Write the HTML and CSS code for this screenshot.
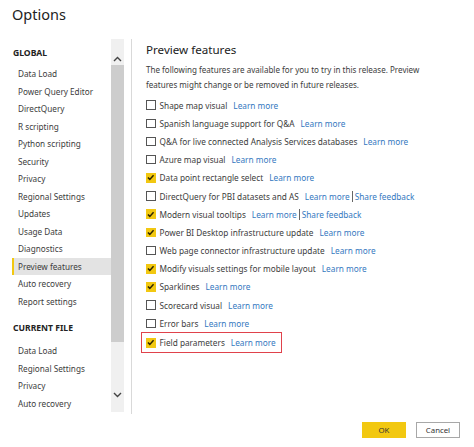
FILE: index.html
```html
<!DOCTYPE html>
<html>
<head>
<meta charset="utf-8">
<link rel="stylesheet" href="styles.css">
</head>
<body>
<div class="dialog">
  <h1 class="title">Options</h1>
  <div class="main">
    <nav class="sidebar">
      <div class="nav-list">
        <div class="group">GLOBAL</div>
        <div class="item">Data Load</div>
        <div class="item">Power Query Editor</div>
        <div class="item">DirectQuery</div>
        <div class="item">R scripting</div>
        <div class="item">Python scripting</div>
        <div class="item">Security</div>
        <div class="item">Privacy</div>
        <div class="item">Regional Settings</div>
        <div class="item">Updates</div>
        <div class="item">Usage Data</div>
        <div class="item">Diagnostics</div>
        <div class="item active">Preview features</div>
        <div class="item">Auto recovery</div>
        <div class="item">Report settings</div>
        <div class="group group2">CURRENT FILE</div>
        <div class="item">Data Load</div>
        <div class="item">Regional Settings</div>
        <div class="item">Privacy</div>
        <div class="item">Auto recovery</div>
      </div>
      <div class="scrollbar">
        <svg class="arrow up" width="9" height="6" viewBox="0 0 9 6"><path d="M1 5 L4.5 1.5 L8 5" fill="none" stroke="#444" stroke-width="1.4"/></svg>
        <div class="thumb"></div>
        <div class="track-rest"></div>
        <svg class="arrow down" width="9" height="6" viewBox="0 0 9 6"><path d="M1 1 L4.5 4.5 L8 1" fill="none" stroke="#444" stroke-width="1.4"/></svg>
      </div>
    </nav>
    <section class="content">
      <h2 class="heading">Preview features</h2>
      <p class="desc">The following features are available for you to try in this release. Preview features might change or be removed in future releases.</p>
      <ul class="features">
        <li class="row"><span class="cb"></span><span class="label">Shape map visual</span><a class="link">Learn more</a></li>
        <li class="row"><span class="cb"></span><span class="label">Spanish language support for Q&amp;A</span><a class="link">Learn more</a></li>
        <li class="row"><span class="cb"></span><span class="label">Q&amp;A for live connected Analysis Services databases</span><a class="link">Learn more</a></li>
        <li class="row"><span class="cb"></span><span class="label">Azure map visual</span><a class="link">Learn more</a></li>
        <li class="row"><span class="cb on"><svg width="8" height="7" viewBox="0 0 8 7"><path d="M1 3.5 L3 5.5 L7 1" fill="none" stroke="#2e2600" stroke-width="1.6"/></svg></span><span class="label">Data point rectangle select</span><a class="link">Learn more</a></li>
        <li class="row"><span class="cb"></span><span class="label">DirectQuery for PBI datasets and AS</span><a class="link">Learn more</a><span class="sep"></span><a class="link">Share feedback</a></li>
        <li class="row"><span class="cb on"><svg width="8" height="7" viewBox="0 0 8 7"><path d="M1 3.5 L3 5.5 L7 1" fill="none" stroke="#2e2600" stroke-width="1.6"/></svg></span><span class="label">Modern visual tooltips</span><a class="link">Learn more</a><span class="sep"></span><a class="link">Share feedback</a></li>
        <li class="row"><span class="cb on"><svg width="8" height="7" viewBox="0 0 8 7"><path d="M1 3.5 L3 5.5 L7 1" fill="none" stroke="#2e2600" stroke-width="1.6"/></svg></span><span class="label">Power BI Desktop infrastructure update</span><a class="link">Learn more</a></li>
        <li class="row"><span class="cb"></span><span class="label">Web page connector infrastructure update</span><a class="link">Learn more</a></li>
        <li class="row"><span class="cb on"><svg width="8" height="7" viewBox="0 0 8 7"><path d="M1 3.5 L3 5.5 L7 1" fill="none" stroke="#2e2600" stroke-width="1.6"/></svg></span><span class="label">Modify visuals settings for mobile layout</span><a class="link">Learn more</a></li>
        <li class="row"><span class="cb on"><svg width="8" height="7" viewBox="0 0 8 7"><path d="M1 3.5 L3 5.5 L7 1" fill="none" stroke="#2e2600" stroke-width="1.6"/></svg></span><span class="label">Sparklines</span><a class="link">Learn more</a></li>
        <li class="row"><span class="cb"></span><span class="label">Scorecard visual</span><a class="link">Learn more</a></li>
        <li class="row"><span class="cb"></span><span class="label">Error bars</span><a class="link">Learn more</a></li>
        <li class="row highlighted"><span class="cb on"><svg width="8" height="7" viewBox="0 0 8 7"><path d="M1 3.5 L3 5.5 L7 1" fill="none" stroke="#2e2600" stroke-width="1.6"/></svg></span><span class="label">Field parameters</span><a class="link">Learn more</a></li>
      </ul>
    </section>
  </div>
  <div class="footer">
    <button class="btn ok">OK</button>
    <button class="btn cancel">Cancel</button>
  </div>
</div>
</body>
</html>
```

FILE: styles.css
```css
* { box-sizing: border-box; }
html, body { margin: 0; padding: 0; background: #fff; }
body {
  font-family: "Noto Sans", "Open Sans", sans-serif;
  color: #333;
  width: 474px;
  height: 447px;
  overflow: hidden;
}
.dialog { display: flex; flex-direction: column; height: 447px; }
.title {
  margin: 0;
  padding: 3px 0 0 12px;
  height: 39px;
  font-size: 14.5px;
  font-weight: 400;
  line-height: 22px;
  color: #222;
}
.main { display: flex; height: 375px; }
.sidebar {
  display: flex;
  width: 132px;
  border-right: 1px solid #d9d9d9;
  padding-left: 12px;
}
.nav-list { width: 99px; padding-top: 5px; }
.group {
  font-size: 8.6px;
  font-weight: 700;
  height: 18px;
  line-height: 18px;
  margin-bottom: 3px;
  padding-left: 1px;
  color: #222;
}
.group2 { margin-top: 9px; margin-bottom: 5px; }
.item {
  font-size: 8.2px;
  height: 17.5px;
  line-height: 17.5px;
  padding-left: 6px;
  color: #3c3c3c;
  white-space: nowrap;
}
.item.active {
  background: #e3e3e3;
  border-left: 2px solid #f2c811;
  padding-left: 4px;
}
.scrollbar {
  width: 13px;
  height: 373px;
  background: #f0f0f0;
  display: flex;
  flex-direction: column;
  align-items: center;
}
.arrow { flex: none; }
.arrow.up { margin-top: 17px; margin-bottom: 3px; }
.thumb { width: 13px; height: 277px; background: #cdcdcd; }
.track-rest { flex: 1; }
.arrow.down { margin-bottom: 14px; }
.content { flex: 1; padding: 2px 0 0 14px; }
.heading {
  margin: 0;
  font-size: 11.6px;
  font-weight: 400;
  line-height: 18px;
  color: #222;
}
.desc {
  margin: 3px 0 4px 0;
  font-size: 8.05px;
  line-height: 15px;
  width: 285px;
  color: #3c3c3c;
}
.features { list-style: none; margin: 0; padding: 0; }
.row {
  display: flex;
  align-items: center;
  height: 18.2px;
  font-size: 8.25px;
  color: #3c3c3c;
  white-space: nowrap;
}
.cb {
  flex: none;
  width: 9.5px;
  height: 9.5px;
  border: 1.2px solid #555;
  margin-right: 4px;
  display: flex;
  align-items: center;
  justify-content: center;
}
.cb.on { background: #f2c811; border-color: #f2c811; }
.label { margin-right: 6px; }
.link { color: #3478c0; }
.sep { width: 1px; height: 11px; background: #666; margin: 0 2px; }
.row.highlighted {
  outline: 1.5px solid #e0424b;
  margin-left: -4px;
  padding-left: 4px;
  width: 139px;
  height: 19px;
  margin-top: 1px;
}
.footer {
  display: flex;
  justify-content: flex-end;
  gap: 10px;
  padding: 8px 14px 0 0;
}
.btn {
  width: 44px;
  height: 16px;
  font-family: inherit;
  font-size: 7.8px;
  padding: 0;
  border: 1px solid #a8a8a8;
  background: #fff;
  color: #333;
}
.btn.ok { background: #f2c811; border-color: #f2c811; }
```
